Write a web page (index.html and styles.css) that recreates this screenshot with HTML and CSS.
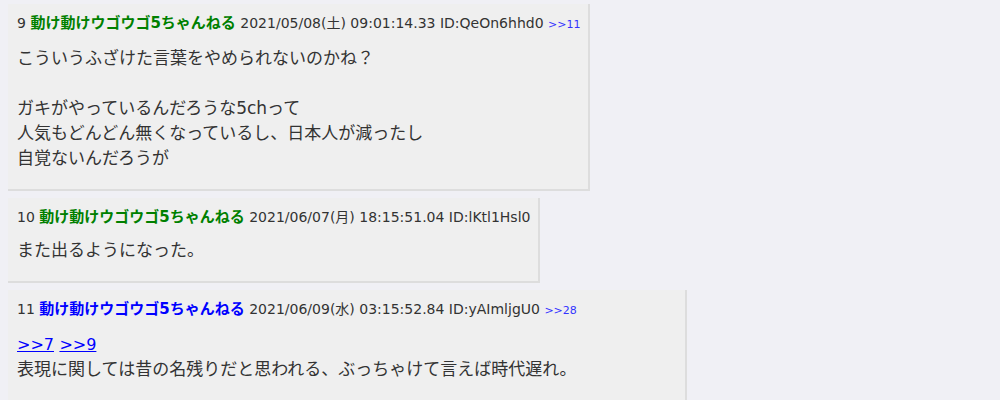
FILE: index.html
```html
<!DOCTYPE html>
<html lang="ja">
<head>
    <meta charset="UTF-8">
    <meta name="viewport" content="width=device-width, initial-scale=1.0">
    <title>動け動けウゴウゴ5ちゃんねる</title>
    <link rel="stylesheet" href="styles.css">
</head>
<body>
    <div class="thread">
        <div class="post" id="9">
            <div class="meta">
                <span class="number">9</span>
                <span class="name"><b>動け動けウゴウゴ5ちゃんねる</b></span>
                <span class="date">2021/05/08(土) 09:01:14.33</span>
                <span class="uid">ID:QeOn6hhd0</span>
                <a class="back-links" href="#11">&gt;&gt;11</a>
            </div>
            <div class="message">こういうふざけた言葉をやめられないのかね？<br><br>ガキがやっているんだろうな5chって<br>人気もどんどん無くなっているし、日本人が減ったし<br>自覚ないんだろうが</div>
        </div>

        <div class="post" id="10">
            <div class="meta">
                <span class="number">10</span>
                <span class="name"><b>動け動けウゴウゴ5ちゃんねる</b></span>
                <span class="date">2021/06/07(月) 18:15:51.04</span>
                <span class="uid">ID:lKtl1Hsl0</span>
            </div>
            <div class="message">また出るようになった。</div>
        </div>

        <div class="post" id="11">
            <div class="meta">
                <span class="number">11</span>
                <span class="name sage"><b>動け動けウゴウゴ5ちゃんねる</b></span>
                <span class="date">2021/06/09(水) 03:15:52.84</span>
                <span class="uid">ID:yAImljgU0</span>
                <a class="back-links" href="#28">&gt;&gt;28</a>
            </div>
            <div class="message"><a class="reply" href="#7">&gt;&gt;7</a> <a class="reply" href="#9">&gt;&gt;9</a><br>表現に関しては昔の名残りだと思われる、ぶっちゃけて言えば時代遅れ。<br><br>昔はみんな普通に使っていた言い回しでも、今の若い人からすると古臭く感じるだろう</div>
        </div>
    </div>
</body>
</html>
```

FILE: styles.css
```css
* {
    box-sizing: border-box;
}

body {
    margin: 4px 8px;
    background-color: #f0f0f5;
    color: #333;
    font-family: "DejaVu Sans", "Noto Sans CJK JP", sans-serif;
}

.thread {
    display: flex;
    flex-direction: column;
    align-items: flex-start;
}

.post {
    margin-bottom: 7px;
    padding: 8px 8px 8px 9px;
    background-color: #efefef;
    border-right: 2px solid #ddd;
    border-bottom: 2px solid #ddd;
}

.meta {
    font-size: 14px;
    line-height: 22px;
    white-space: nowrap;
}

.name {
    color: #008000;
    font-size: 15px;
}

.name.sage {
    color: #0000ff;
}

.back-links {
    font-size: 11px;
    color: #3333ff;
    text-decoration: none;
}

.message {
    margin-top: 10px;
    padding-bottom: 10px;
    font-size: 17px;
    line-height: 25px;
}

.reply {
    color: #0000ff;
    font-size: 16px;
}
```
